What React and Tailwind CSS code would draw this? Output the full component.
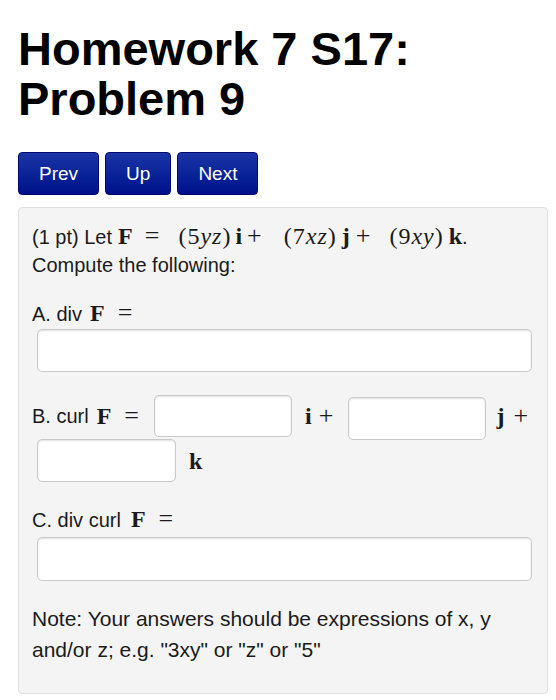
import React from "react";

const serif = "font-['Liberation_Serif','Times_New_Roman',serif]";

// one math symbol with its own left gap
function Sym({ children, gap = 0, bold = false, op = false }) {
  return (
    <span
      className={`${serif} ${op ? "text-[26px]" : "text-[24px]"} leading-[10px] ${bold ? "font-bold" : ""}`}
      style={{ marginLeft: gap }}
    >
      {children}
    </span>
  );
}

function Term({ num, a, b, gap }) {
  return (
    <span className={`${serif} text-[24px] leading-[10px] tracking-[1px]`} style={{ marginLeft: gap }}>
      ({num}
      <i>{a}</i>
      <i>{b}</i>)
    </span>
  );
}

function Box({ className = "" }) {
  return (
    <input
      type="text"
      className={`bg-white border border-[#c9c9c9] rounded-[5px] shadow-[inset_0_1px_2px_rgba(0,0,0,0.12)] outline-none ${className}`}
    />
  );
}

function NavButton({ children }) {
  return (
    <button className="h-[43px] px-[20px] rounded-[4px] border border-[#000a6e] bg-gradient-to-b from-[#1a33a6] to-[#00108a] text-white text-[19px] leading-none">
      {children}
    </button>
  );
}

export default function App() {
  return (
    <div className="min-h-[700px] bg-white text-black font-['Liberation_Sans',Arial,sans-serif] pl-[18px] pr-[8px]">
      {/* Header */}
      <h1 className="pt-[24px] text-[47px] leading-[50px] font-bold">
        Homework 7 S17:
        <br />
        Problem 9
      </h1>

      {/* Nav */}
      <div className="flex gap-[6px] mt-[28px]">
        <NavButton>Prev</NavButton>
        <NavButton>Up</NavButton>
        <NavButton>Next</NavButton>
      </div>

      {/* Problem */}
      <div className="mt-[12px] bg-[#f4f4f4] border border-[#e0e0e0] rounded-[4px] pt-[15px] pb-[28px] pl-[13px] pr-[15px] text-[20px] text-[#1a1a1a]">
        <p className="leading-[28px] whitespace-nowrap">
          (1 pt) Let
          <Sym gap={6} bold>F</Sym>
          <Sym gap={12} op>=</Sym>
          <Term num="5" a="y" b="z" gap={19} />
          <Sym gap={4} bold>i</Sym>
          <Sym gap={5} op>+</Sym>
          <Term num="7" a="x" b="z" gap={22} />
          <Sym gap={5} bold>j</Sym>
          <Sym gap={6} op>+</Sym>
          <Term num="9" a="x" b="y" gap={19} />
          <Sym gap={5} bold>k</Sym>.
          <br />
          Compute the following:
        </p>

        {/* A */}
        <p className="mt-[21px] leading-[28px]">
          A. div
          <Sym gap={8} bold>F</Sym>
          <Sym gap={13} op>=</Sym>
        </p>
        <Box className="block mt-[1px] ml-[5px] h-[43px] w-[495px]" />

        {/* B */}
        <div className="mt-[23px] flex items-center h-[42px]">
          <span className="leading-[28px]">B. curl</span>
          <Sym gap={8} bold>F</Sym>
          <Sym gap={13} op>=</Sym>
          <Box className="ml-[15px] h-[42px] w-[138px]" />
          <Sym gap={13} bold>i</Sym>
          <Sym gap={7} op>+</Sym>
          <Box className="ml-[15px] h-[43px] w-[138px] mt-[5px]" />
          <Sym gap={10} bold>j</Sym>
          <Sym gap={9} op>+</Sym>
        </div>
        <div className="mt-[2px] flex items-center h-[43px]">
          <Box className="ml-[5px] h-[43px] w-[139px]" />
          <Sym gap={13} bold>k</Sym>
        </div>

        {/* C */}
        <p className="mt-[24px] leading-[28px]">
          C. div curl
          <Sym gap={10} bold>F</Sym>
          <Sym gap={13} op>=</Sym>
        </p>
        <Box className="block mt-[3px] ml-[5px] h-[44px] w-[495px]" />

        <p className="mt-[22px] leading-[31px] text-[21px]">
          Note: Your answers should be expressions of x, y
          <br />
          and/or z; e.g. "3xy" or "z" or "5"
        </p>
      </div>
    </div>
  );
}
